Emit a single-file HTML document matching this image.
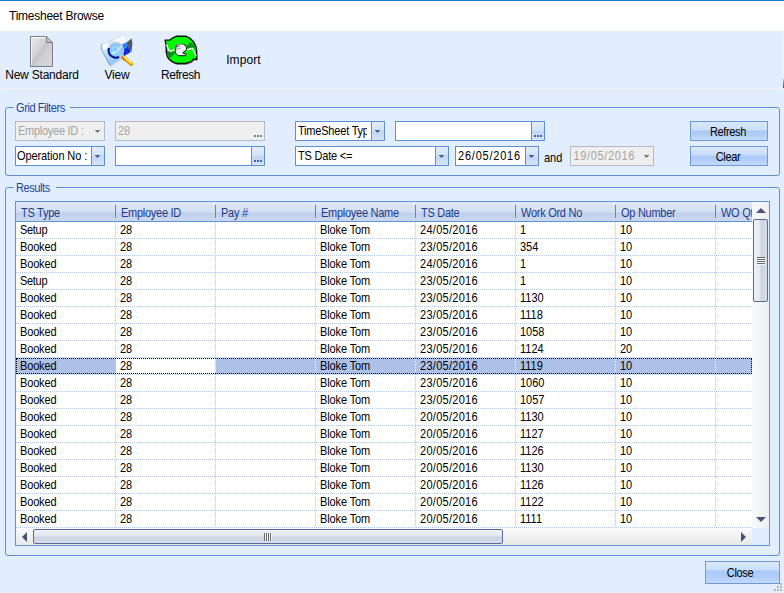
<!DOCTYPE html>
<html lang="en"><head><meta charset="utf-8"><title>Timesheet Browse</title>
<style>
html,body{margin:0;padding:0}
body{width:784px;height:593px;overflow:hidden;background:#e2eefe;font-family:"Liberation Sans",sans-serif;font-size:11px;color:#000}
#win{position:relative;width:784px;height:593px;overflow:hidden;background:#e2eefe}
#win div,#win i,#win span,#win b{box-sizing:border-box}
#win i,#win b{display:block;position:absolute;font-style:normal}
#topline{position:absolute;left:0;top:0;width:784px;height:1px;background:#1a7ad4}
#title{position:absolute;left:0;top:1px;width:784px;height:30px;background:#fff;font-size:12px;line-height:30px;padding-left:9px;letter-spacing:-0.25px;color:#000}
#toolbar{position:absolute;left:0;top:31px;width:784px;height:57px;background:#e2eefe}
#icons{position:absolute;left:0;top:0}
.tbl{position:absolute;top:36px;height:16px;line-height:16px;font-size:12px;text-align:center;white-space:nowrap}
.tbl.imp{top:21px}
#tbedge{position:absolute;left:783px;top:3px;width:1px;height:54px;background:linear-gradient(#f4f7fb 0,#f4f7fb 80%,#8a8a8a 90%,#555 100%)}
#tbline{position:absolute;left:2px;top:88px;width:780px;height:1px;background:#f0f0f0}
.gb{position:absolute;border:1px solid #5f8ed2;border-radius:3px}
.gbl{position:absolute;height:13px;line-height:13px;background:#e2eefe;color:#18449e;padding-left:2px;white-space:nowrap;letter-spacing:-0.42px;transform:scaleY(1.125);transform-origin:0 2px}
.cb,.tf{position:absolute;height:20px;border:1px solid #5e8fd4;background:#fff;overflow:hidden}
.cb .t,.tf .t{position:absolute;left:2px;top:0;line-height:18px;white-space:nowrap;letter-spacing:-0.2px;transform:scaleY(1.125);transform-origin:0 13px}
.cb .t.clip{width:69px;overflow:hidden}
.cb.dt .t{left:2px;letter-spacing:0.78px}
.cb.dt.dis .t{left:2.5px;letter-spacing:0.65px}
.dis{border-color:#b5b9c1;background:#efefef;color:#a4a4a4}
.btn{right:0;top:0;width:13px;height:18px;border-left:1px solid #5e8fd4;background:linear-gradient(#e2ecfb 0,#d3e2f8 45%,#c1d5f3 55%,#d6e4f9 100%)}
.ar{right:4px;top:8px;width:5px;height:3px;color:#44679f;background:linear-gradient(currentColor,currentColor) 0 0/5px 1px no-repeat,linear-gradient(currentColor,currentColor) 1px 1px/3px 1px no-repeat,linear-gradient(currentColor,currentColor) 2px 2px/1px 1px no-repeat}
.dis .ar{color:#7e7e7e}
.dots{right:2px;top:13px;width:8px;height:2px}
.dots b{top:0;width:2px;height:2px;background:#3b69b5}
.dots b:nth-child(1){left:0}.dots b:nth-child(2){left:3px}.dots b:nth-child(3){left:6px}
.dis .dots b{background:#808080}
.and{position:absolute;left:544px;top:151px;height:14px;line-height:14px;transform:scaleY(1.125);transform-origin:0 11px}
.pb{position:absolute;border:1px solid #6d9bd8;text-align:center;background:linear-gradient(#dae8fd 0,#cadefb 8px,#a9c9f8 9px,#b3cff9 75%,#c4dafb 100%)}
.pb span{position:absolute;left:0;right:0;top:50%;margin-top:-6px;height:13px;line-height:13px;letter-spacing:-0.35px;transform:scaleY(1.125);transform-origin:0 2px;margin-left:-2px}
#grid{position:absolute;left:15px;top:201px;width:755px;height:345px;border:1px solid #6291d4;background:#fff;overflow:hidden}
#hdr{position:absolute;left:0;top:0;width:736px;height:20px;border-bottom:1px solid #6291d4;background:linear-gradient(#e0e9f8 0,#d3dff3 50%,#c1d0ea 58%,#cad8ef 100%);color:#1c3c8e;overflow:hidden}
.hc{position:absolute;top:0;height:20px;line-height:22px;padding-left:5px;letter-spacing:-0.27px;white-space:nowrap;overflow:hidden;transform:scaleY(1.125);transform-origin:0 15px}
.hs{top:3px;width:1px;height:13px;background:#5f86c7}
.row{position:absolute;left:0;width:736px;height:17px;background-image:linear-gradient(90deg,#b3c7e6 50%,transparent 50%);background-size:2px 1px;background-repeat:repeat-x;background-position:0 16px}
.c{position:absolute;top:0;height:16px;line-height:15px;padding-left:4px;width:99px;white-space:nowrap;overflow:hidden;transform:scaleY(1.125);transform-origin:0 3px}
.selbg{left:0;top:0;width:736px;height:16px;background:#aec1e9}
.wv{top:1px;width:1px;height:14px;z-index:2;background-image:linear-gradient(#fff 50%,#aec1e9 50%);background-size:1px 2px}
.curbg{left:100px;top:0;width:100px;height:16px;background:#fff}
.focus{left:0;top:0;width:736px;height:16px;border:1px dotted #000;z-index:3}
.vl{top:20px;width:1px;height:306px;background-image:linear-gradient(#b3c7e6 50%,transparent 50%);background-size:1px 2px}
#vsb{position:absolute;left:736px;top:0;width:17px;height:326px;background:linear-gradient(90deg,#f8f9fb,#edeff2)}
#vsb .up{left:4px;top:6px;width:0;height:0;border-left:5px solid transparent;border-right:5px solid transparent;border-bottom:5px solid #475477}
#vsb .dn{left:4px;top:315px;width:0;height:0;border-left:5px solid transparent;border-right:5px solid transparent;border-top:5px solid #475477}
.vth{position:absolute;left:1px;top:17px;width:15px;height:83px;border:1px solid #5a6a98;border-radius:2px;background:linear-gradient(90deg,#eef1f6 0,#e2e6ee 48%,#cbd3e0 52%,#d6dce8 100%)}
.vth .g{left:3px;top:37px;width:8px;height:8px;background:linear-gradient(#6c6c6c 50%,#f2f4f8 50%);background-size:8px 2px}
#hsb{position:absolute;left:0;top:326px;width:736px;height:17px;background:linear-gradient(#fbfbfb,#e8e8e8)}
#hsb .lf{left:6px;top:4px;width:0;height:0;border-top:5px solid transparent;border-bottom:5px solid transparent;border-right:5px solid #475477}
#hsb .rt{left:725px;top:4px;width:0;height:0;border-top:5px solid transparent;border-bottom:5px solid transparent;border-left:5px solid #475477}
.hth{position:absolute;left:17px;top:1px;width:470px;height:15px;border:1px solid #5a6a98;border-radius:2px;background:linear-gradient(#eef1f6 0,#e4e8ef 48%,#ccd4e1 52%,#d6dce8 100%)}
.hth .g{left:230px;top:3px;width:8px;height:8px;background:linear-gradient(90deg,#6c6c6c 50%,#f2f4f8 50%);background-size:2px 8px}
#corner{position:absolute;left:736px;top:326px;width:17px;height:17px;background:#e2eefe}
#grip{position:absolute;left:771px;top:582px;width:12px;height:12px}
#grip i{width:2px;height:2px;background:#b9b5ad}
#grip i:nth-child(1){left:9px;top:1px}#grip i:nth-child(2){left:6px;top:4px}#grip i:nth-child(3){left:9px;top:4px}
#grip i:nth-child(4){left:3px;top:7px}#grip i:nth-child(5){left:6px;top:7px}#grip i:nth-child(6){left:9px;top:7px}

</style></head>
<body>
<div id="win">
<div id="topline"></div>
<div id="title">Timesheet Browse</div>
<div id="toolbar">
<svg id="icons" width="240" height="57" viewBox="0 31 240 57">
<defs>
<linearGradient id="pg" x1="0" y1="0" x2="1" y2="1">
<stop offset="0" stop-color="#ececee"/><stop offset="0.4" stop-color="#d2d2d6"/><stop offset="0.5" stop-color="#c2c2c8"/><stop offset="0.6" stop-color="#cecfd3"/><stop offset="1" stop-color="#d8d8db"/>
</linearGradient>
<radialGradient id="lens" cx="0.5" cy="0.5" r="0.6">
<stop offset="0" stop-color="#48b8ff"/><stop offset="0.3" stop-color="#98d6ff"/><stop offset="0.75" stop-color="#7cc4ff"/><stop offset="1" stop-color="#4a98ee"/>
</radialGradient>
<linearGradient id="fold" x1="0" y1="0" x2="0.6" y2="1">
<stop offset="0" stop-color="#f8fcff"/><stop offset="0.45" stop-color="#c4e3fc"/><stop offset="1" stop-color="#7cbef6"/>
</linearGradient>
</defs>
<!-- new standard: blank page -->
<path d="M30.5 36.5H46.5L52.5 42.5V66.5H30.5Z" fill="url(#pg)" stroke="#7b7b86" stroke-width="1"/>
<path d="M31.5 37.5H46" stroke="#fafafa" stroke-width="1" fill="none"/>
<path d="M31.5 37.5V65.5" stroke="#f4f4f4" stroke-width="1" fill="none"/>
<path d="M46.5 36.5V42.5H52.5Z" fill="#c2c2d6" stroke="#7b7b86" stroke-width="1" stroke-linejoin="round"/>
<!-- view: folder + magnifier -->
<g>
<path d="M126.4 42.5L131.8 38.6L132.4 43.5L131.5 52.3L129.8 49.6Z" fill="#565a60"/>
<path d="M101.4 44.5L107.5 42.1L121.700 35.3L125.1 37.1L126.1 42.1L127.1 46.9L130.800 52.3L110.2 66.1L108.2 62.4L101.4 49.6Z" fill="url(#fold)"/>
<path d="M101.4 44.5L101.4 49.6L110.2 66.1" fill="none" stroke="#4a4e58" stroke-width="0.9" stroke-dasharray="1 1"/>
<path d="M101.4 44.5L107.5 42.1L121.700 35.3" fill="none" stroke="#9ca4b0" stroke-width="0.7" stroke-dasharray="1 1"/>
<path d="M102 45L107.800 42.600L109.500 47.500L103.500 50.500Z" fill="#ffffff" opacity="0.8"/>
<path d="M112.2 40.1L121.700 35.4L125.1 37.2L125.8 42.1L121 44.2Z" fill="#f5f7fd"/>
<path d="M122.7 44.5L126.4 42.8L129.8 49.6L131.1 53.3L125.1 56.5L121.5 52Z" fill="#0c2ae2"/>
<path d="M123 44.400L126.3 43L127.6 47.2L124.5 49Z" fill="#2d8eff"/>
<path d="M121.700 57.6L130.900 52.000L131.3 53.8L122.5 59.2Z" fill="#e9eff8"/>
<path d="M110.2 66.1L121.8 58.300L122.400 59.5L110.800 67Z" fill="#cfd9e8"/>
<path d="M123.5 57.4L131.400 64.000" stroke="#c08400" stroke-width="3.8" stroke-linecap="round"/>
<path d="M123.700 57.1L131.5 63.6" stroke="#ffd414" stroke-width="2.5" stroke-linecap="round"/>
<path d="M124.300 56.5L131.3 62.3" stroke="#fff6b8" stroke-width="0.9" stroke-linecap="round"/>
<path d="M122.5 57.600L124 60.300" stroke="#e02010" stroke-width="1" stroke-linecap="round"/>
<circle cx="115.8" cy="50.2" r="7.4" fill="url(#lens)"/>
<path d="M110.500 54.6L121.300 45.6L122.300 47.2L111.8 55.900Z" fill="#dff3ff" opacity="0.7"/>
<path d="M109.000 47.800A7.4 7.4 0 0 0 119.200 56.9" fill="none" stroke="#0c0c8a" stroke-width="2"/>
<path d="M109.000 47.800A7.4 7.4 0 0 1 123.3 51.5A7.4 7.4 0 0 1 119.200 56.9" fill="none" stroke="#c6cad6" stroke-width="1.4"/>
</g>
<!-- refresh: green arrows -->
<g stroke-linejoin="round">
<path d="M165.8 41.4L170.5 41.4L173.6 39.1L177.6 37.5L186.4 37.5L190.4 39.4L194.2 43.1L196.2 46.8L197.2 50.9L197.4 58.3L197.5 60.7L194.5 60.4L191.8 63.0L186.4 64.8L177.6 64.8L174.2 63.7L170.2 61.0L168.2 58.3L167.0 53.6L166.8 46.1Z" fill="#8e8e8e"/>
<path d="M165.1 40.1L169.8 40.1L172.9 37.8L176.9 36.2L185.7 36.2L189.7 38.1L193.5 41.8L195.5 45.5L196.5 49.6L196.7 57.0L196.8 59.4L193.8 59.1L191.1 61.7L185.7 63.5L176.9 63.5L173.5 62.4L169.5 59.7L167.5 57.0L166.3 52.3L166.1 44.8Z" fill="#00fa00" stroke="#101010" stroke-width="1.4"/>
<path d="M167 51.2L173.6 51.2L174.800 53.2L170.6 57.7L167.5 56.2Z" fill="#0a8c20"/>
<path d="M190.300 42.1L194.300 45.1L194.800 48.6L192.300 47.9L187.700 48.6L186.700 46.1Z" fill="#0a8c20"/>
<path d="M166.5 44.6L169 50.7L171.1 51.2L175.1 49.400L179.700 47.900" stroke="#ffffff" stroke-width="1.3" fill="none"/>
<path d="M187.200 49.900L192.300 48.100L194.800 53.2L196.300 56.2" stroke="#ffffff" stroke-width="1.3" fill="none"/>
<path d="M176.1 47.1L178.1 44.6L183.700 44.300L186.2 46.1L186.700 49.700L182.700 52.900L186.2 54.2L185.2 55.700L178.1 55.700L175.600 53.2L175.1 50.700Z" fill="#f0f0f4" stroke="#101010" stroke-width="1"/>
<path d="M176.600 46.700L178.300 44.700L183.600 44.400" stroke="#9a9a9a" stroke-width="1.3" fill="none"/>
<path d="M175.2 45.300L179.600 46.400" stroke="#a01ea0" stroke-width="0.9" fill="none"/>
<path d="M176 50L178 48.600L180.600 48.2" stroke="#b4b4b4" stroke-width="1.2" fill="none"/>
</g>
</svg>

<div class="tbl" style="left:5px;width:74px;letter-spacing:-0.2px">New Standard</div>
<div class="tbl" style="left:104px;width:26px;letter-spacing:-0.2px">View</div>
<div class="tbl" style="left:160px;width:41px;letter-spacing:-0.4px">Refresh</div>
<div class="tbl imp" style="left:225px;width:37px;letter-spacing:0.1px">Import</div>
<div id="tbedge"></div><div id="tbedge2"></div>
</div>
<div id="tbline"></div>
<div class="gb" style="left:5px;top:107px;width:775px;height:69px"></div>
<div class="gbl" style="left:14px;top:101px;width:56px">Grid Filters</div>
<div class="cb dis" style="left:15px;top:121px;width:90px"><span class="t" style="letter-spacing:-0.27px">Employee ID :</span><i class="ar"></i></div>
<div class="tf dis" style="left:115px;top:121px;width:150px"><span class="t">28</span><i class="dots"><b></b><b></b><b></b></i></div>
<div class="cb" style="left:15px;top:146px;width:90px"><span class="t" style="left:1px;letter-spacing:-0.1px">Operation No :</span><i class="btn"></i><i class="ar"></i></div>
<div class="tf" style="left:115px;top:146px;width:150px"><i class="btn"></i><i class="dots"><b></b><b></b><b></b></i></div>
<div class="cb" style="left:295px;top:121px;width:90px"><span class="t clip">TimeSheet Type</span><i class="btn"></i><i class="ar"></i></div>
<div class="tf" style="left:395px;top:121px;width:150px"><i class="btn"></i><i class="dots"><b></b><b></b><b></b></i></div>
<div class="cb" style="left:295px;top:146px;width:154px"><span class="t">TS Date &lt;=</span><i class="btn"></i><i class="ar"></i></div>
<div class="cb dt" style="left:455px;top:146px;width:84px"><span class="t">26/05/2016</span><i class="btn"></i><i class="ar"></i></div>
<div class="and">and</div>
<div class="cb dt dis" style="left:570px;top:146px;width:84px"><span class="t">19/05/2016</span><i class="ar"></i></div>
<div class="pb" style="left:690px;top:121px;width:78px;height:20px"><span>Refresh</span></div>
<div class="pb" style="left:690px;top:146px;width:78px;height:20px"><span>Clear</span></div>
<div class="gb" style="left:5px;top:187px;width:775px;height:369px"></div>
<div class="gbl" style="left:14px;top:181px;width:42px">Results</div>
<div id="grid">
<div id="hdr">
<div class="hc" style="left:0px;width:100px">TS Type</div>
<div class="hc" style="left:100px;width:100px">Employee ID</div><i class="hs" style="left:99px"></i>
<div class="hc" style="left:200px;width:100px">Pay #</div><i class="hs" style="left:199px"></i>
<div class="hc" style="left:300px;width:100px">Employee Name</div><i class="hs" style="left:299px"></i>
<div class="hc" style="left:400px;width:100px">TS Date</div><i class="hs" style="left:399px"></i>
<div class="hc" style="left:500px;width:100px">Work Ord No</div><i class="hs" style="left:499px"></i>
<div class="hc" style="left:600px;width:100px">Op Number</div><i class="hs" style="left:599px"></i>
<div class="hc" style="left:700px;width:36px">WO Qt</div><i class="hs" style="left:699px"></i>
</div>
<div class="row" style="top:20px"><span class="c" style="left:0px;letter-spacing:-0.3px">Setup</span><span class="c" style="left:100px">28</span><span class="c" style="left:200px"></span><span class="c" style="left:300px;letter-spacing:-0.12px">Bloke Tom</span><span class="c" style="left:400px;letter-spacing:0.28px">24/05/2016</span><span class="c" style="left:500px">1</span><span class="c" style="left:600px">10</span></div>
<div class="row" style="top:37px"><span class="c" style="left:0px;letter-spacing:-0.15px">Booked</span><span class="c" style="left:100px">28</span><span class="c" style="left:200px"></span><span class="c" style="left:300px;letter-spacing:-0.12px">Bloke Tom</span><span class="c" style="left:400px;letter-spacing:0.28px">23/05/2016</span><span class="c" style="left:500px">354</span><span class="c" style="left:600px">10</span></div>
<div class="row" style="top:54px"><span class="c" style="left:0px;letter-spacing:-0.15px">Booked</span><span class="c" style="left:100px">28</span><span class="c" style="left:200px"></span><span class="c" style="left:300px;letter-spacing:-0.12px">Bloke Tom</span><span class="c" style="left:400px;letter-spacing:0.28px">24/05/2016</span><span class="c" style="left:500px">1</span><span class="c" style="left:600px">10</span></div>
<div class="row" style="top:71px"><span class="c" style="left:0px;letter-spacing:-0.3px">Setup</span><span class="c" style="left:100px">28</span><span class="c" style="left:200px"></span><span class="c" style="left:300px;letter-spacing:-0.12px">Bloke Tom</span><span class="c" style="left:400px;letter-spacing:0.28px">23/05/2016</span><span class="c" style="left:500px">1</span><span class="c" style="left:600px">10</span></div>
<div class="row" style="top:88px"><span class="c" style="left:0px;letter-spacing:-0.15px">Booked</span><span class="c" style="left:100px">28</span><span class="c" style="left:200px"></span><span class="c" style="left:300px;letter-spacing:-0.12px">Bloke Tom</span><span class="c" style="left:400px;letter-spacing:0.28px">23/05/2016</span><span class="c" style="left:500px">1130</span><span class="c" style="left:600px">10</span></div>
<div class="row" style="top:105px"><span class="c" style="left:0px;letter-spacing:-0.15px">Booked</span><span class="c" style="left:100px">28</span><span class="c" style="left:200px"></span><span class="c" style="left:300px;letter-spacing:-0.12px">Bloke Tom</span><span class="c" style="left:400px;letter-spacing:0.28px">23/05/2016</span><span class="c" style="left:500px">1118</span><span class="c" style="left:600px">10</span></div>
<div class="row" style="top:122px"><span class="c" style="left:0px;letter-spacing:-0.15px">Booked</span><span class="c" style="left:100px">28</span><span class="c" style="left:200px"></span><span class="c" style="left:300px;letter-spacing:-0.12px">Bloke Tom</span><span class="c" style="left:400px;letter-spacing:0.28px">23/05/2016</span><span class="c" style="left:500px">1058</span><span class="c" style="left:600px">10</span></div>
<div class="row" style="top:139px"><span class="c" style="left:0px;letter-spacing:-0.15px">Booked</span><span class="c" style="left:100px">28</span><span class="c" style="left:200px"></span><span class="c" style="left:300px;letter-spacing:-0.12px">Bloke Tom</span><span class="c" style="left:400px;letter-spacing:0.28px">23/05/2016</span><span class="c" style="left:500px">1124</span><span class="c" style="left:600px">20</span></div>
<div class="row sel" style="top:156px"><i class="selbg"></i><i class="curbg"></i><i class="wv" style="left:299px"></i><i class="wv" style="left:399px"></i><i class="wv" style="left:499px"></i><i class="wv" style="left:599px"></i><i class="wv" style="left:699px"></i><span class="c" style="left:0px;letter-spacing:-0.15px">Booked</span><span class="c" style="left:100px">28</span><span class="c" style="left:200px"></span><span class="c" style="left:300px;letter-spacing:-0.12px">Bloke Tom</span><span class="c" style="left:400px;letter-spacing:0.28px">23/05/2016</span><span class="c" style="left:500px">1119</span><span class="c" style="left:600px">10</span><i class="focus"></i></div>
<div class="row" style="top:173px"><span class="c" style="left:0px;letter-spacing:-0.15px">Booked</span><span class="c" style="left:100px">28</span><span class="c" style="left:200px"></span><span class="c" style="left:300px;letter-spacing:-0.12px">Bloke Tom</span><span class="c" style="left:400px;letter-spacing:0.28px">23/05/2016</span><span class="c" style="left:500px">1060</span><span class="c" style="left:600px">10</span></div>
<div class="row" style="top:190px"><span class="c" style="left:0px;letter-spacing:-0.15px">Booked</span><span class="c" style="left:100px">28</span><span class="c" style="left:200px"></span><span class="c" style="left:300px;letter-spacing:-0.12px">Bloke Tom</span><span class="c" style="left:400px;letter-spacing:0.28px">23/05/2016</span><span class="c" style="left:500px">1057</span><span class="c" style="left:600px">10</span></div>
<div class="row" style="top:207px"><span class="c" style="left:0px;letter-spacing:-0.15px">Booked</span><span class="c" style="left:100px">28</span><span class="c" style="left:200px"></span><span class="c" style="left:300px;letter-spacing:-0.12px">Bloke Tom</span><span class="c" style="left:400px;letter-spacing:0.28px">20/05/2016</span><span class="c" style="left:500px">1130</span><span class="c" style="left:600px">10</span></div>
<div class="row" style="top:224px"><span class="c" style="left:0px;letter-spacing:-0.15px">Booked</span><span class="c" style="left:100px">28</span><span class="c" style="left:200px"></span><span class="c" style="left:300px;letter-spacing:-0.12px">Bloke Tom</span><span class="c" style="left:400px;letter-spacing:0.28px">20/05/2016</span><span class="c" style="left:500px">1127</span><span class="c" style="left:600px">10</span></div>
<div class="row" style="top:241px"><span class="c" style="left:0px;letter-spacing:-0.15px">Booked</span><span class="c" style="left:100px">28</span><span class="c" style="left:200px"></span><span class="c" style="left:300px;letter-spacing:-0.12px">Bloke Tom</span><span class="c" style="left:400px;letter-spacing:0.28px">20/05/2016</span><span class="c" style="left:500px">1126</span><span class="c" style="left:600px">10</span></div>
<div class="row" style="top:258px"><span class="c" style="left:0px;letter-spacing:-0.15px">Booked</span><span class="c" style="left:100px">28</span><span class="c" style="left:200px"></span><span class="c" style="left:300px;letter-spacing:-0.12px">Bloke Tom</span><span class="c" style="left:400px;letter-spacing:0.28px">20/05/2016</span><span class="c" style="left:500px">1130</span><span class="c" style="left:600px">10</span></div>
<div class="row" style="top:275px"><span class="c" style="left:0px;letter-spacing:-0.15px">Booked</span><span class="c" style="left:100px">28</span><span class="c" style="left:200px"></span><span class="c" style="left:300px;letter-spacing:-0.12px">Bloke Tom</span><span class="c" style="left:400px;letter-spacing:0.28px">20/05/2016</span><span class="c" style="left:500px">1126</span><span class="c" style="left:600px">10</span></div>
<div class="row" style="top:292px"><span class="c" style="left:0px;letter-spacing:-0.15px">Booked</span><span class="c" style="left:100px">28</span><span class="c" style="left:200px"></span><span class="c" style="left:300px;letter-spacing:-0.12px">Bloke Tom</span><span class="c" style="left:400px;letter-spacing:0.28px">20/05/2016</span><span class="c" style="left:500px">1122</span><span class="c" style="left:600px">10</span></div>
<div class="row" style="top:309px"><span class="c" style="left:0px;letter-spacing:-0.15px">Booked</span><span class="c" style="left:100px">28</span><span class="c" style="left:200px"></span><span class="c" style="left:300px;letter-spacing:-0.12px">Bloke Tom</span><span class="c" style="left:400px;letter-spacing:0.28px">20/05/2016</span><span class="c" style="left:500px">1111</span><span class="c" style="left:600px">10</span></div>
<i class="vl" style="left:99px"></i><i class="vl" style="left:199px"></i><i class="vl" style="left:299px"></i><i class="vl" style="left:399px"></i><i class="vl" style="left:499px"></i><i class="vl" style="left:599px"></i><i class="vl" style="left:699px"></i>
<div id="vsb"><i class="up"></i><div class="vth"><i class="g"></i></div><i class="dn"></i></div>
<div id="hsb"><i class="lf"></i><div class="hth"><i class="g"></i></div><i class="rt"></i></div>
<div id="corner"></div>
</div>
<div class="pb" style="left:705px;top:561px;width:75px;height:23px"><span style="margin-top:-7px;left:-3px">Close</span></div>
<div id="grip"><i></i><i></i><i></i><i></i><i></i><i></i></div>
</div>
</body></html>
